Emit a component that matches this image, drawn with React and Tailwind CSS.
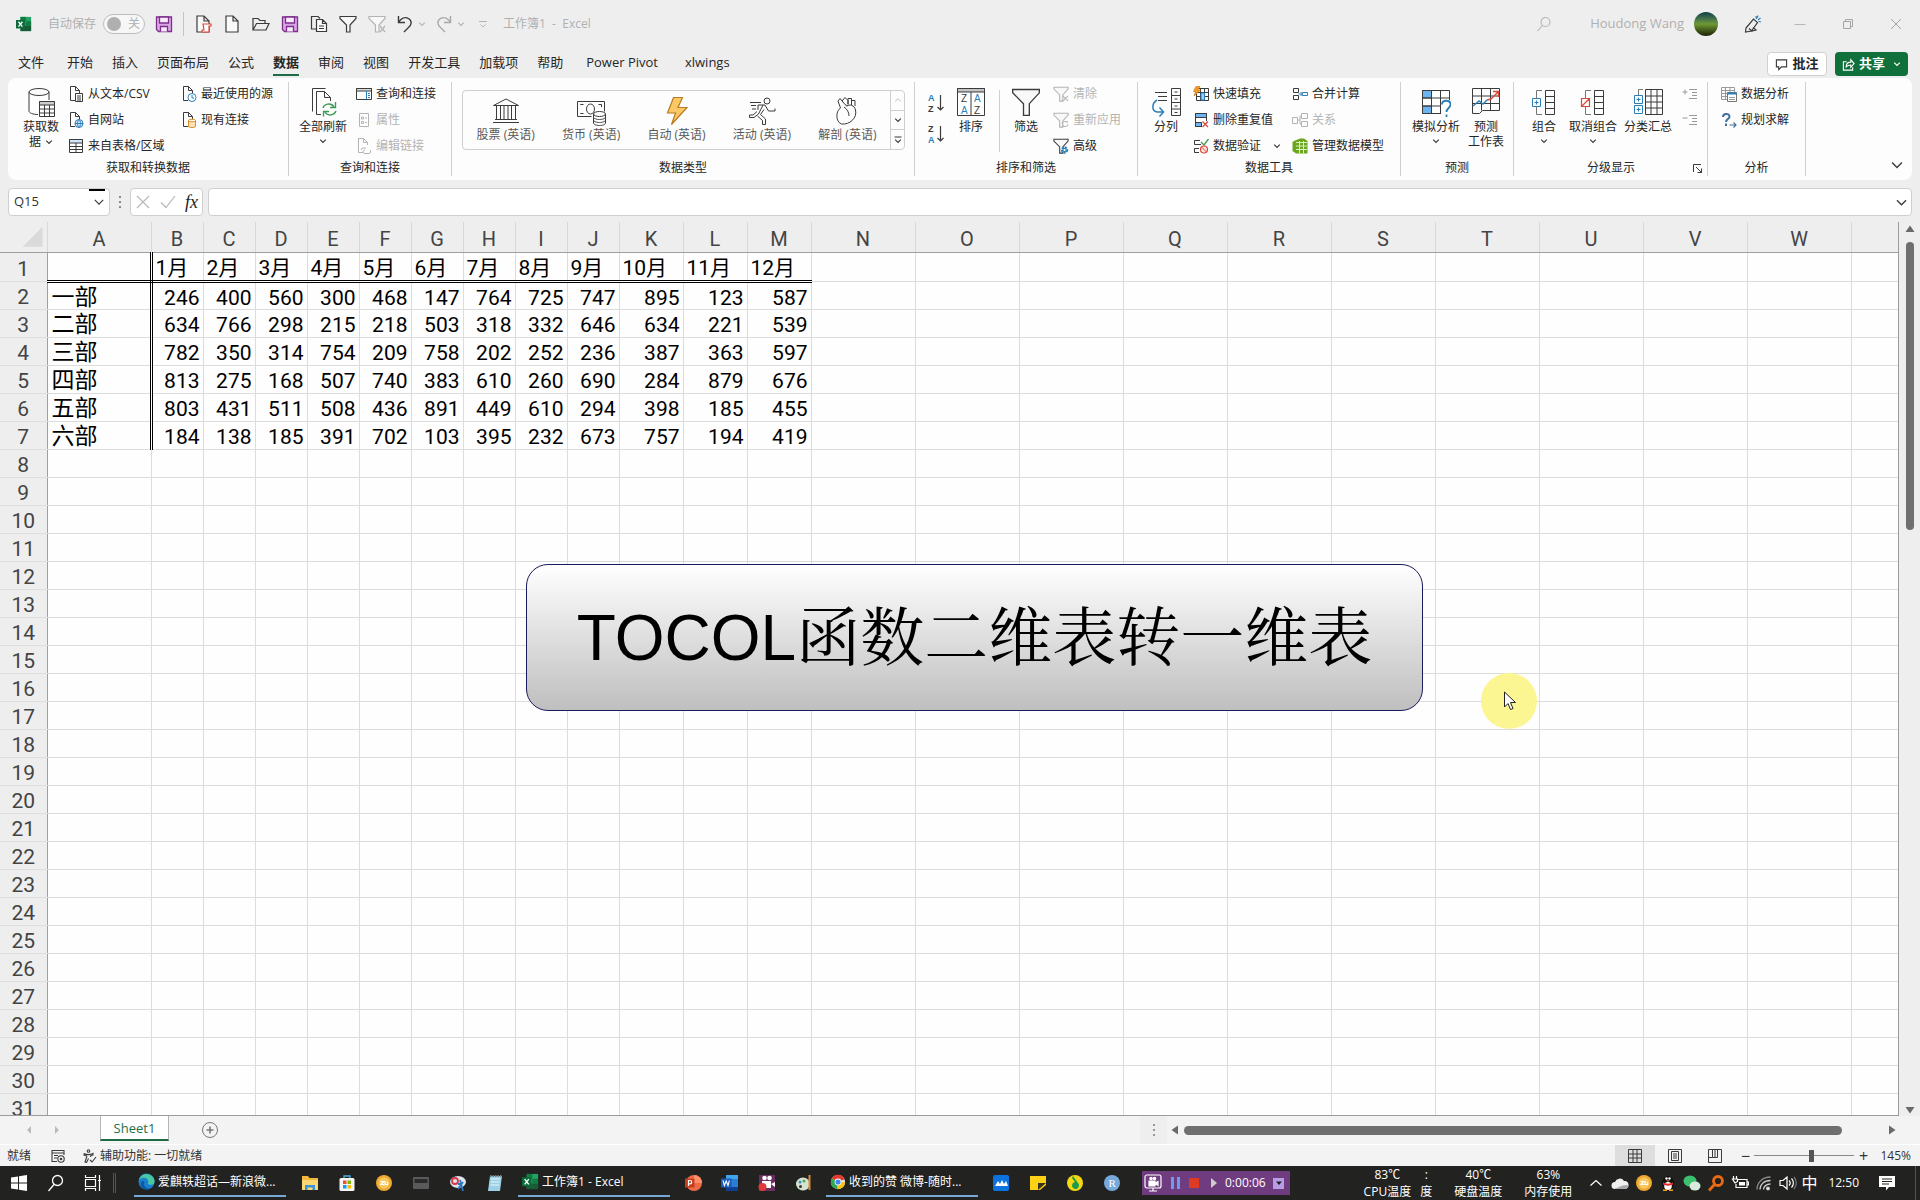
import { useState } from "react";

const TABS = ["文件", "开始", "插入", "页面布局", "公式", "数据", "审阅", "视图", "开发工具", "加载项", "帮助", "Power Pivot", "xlwings"];

const COLUMNS = "ABCDEFGHIJKLMNOPQRSTUVW".split("");

const SHEET = [
  ["", "1月", "2月", "3月", "4月", "5月", "6月", "7月", "8月", "9月", "10月", "11月", "12月"],
  ["一部", 246, 400, 560, 300, 468, 147, 764, 725, 747, 895, 123, 587],
  ["二部", 634, 766, 298, 215, 218, 503, 318, 332, 646, 634, 221, 539],
  ["三部", 782, 350, 314, 754, 209, 758, 202, 252, 236, 387, 363, 597],
  ["四部", 813, 275, 168, 507, 740, 383, 610, 260, 690, 284, 879, 676],
  ["五部", 803, 431, 511, 508, 436, 891, 449, 610, 294, 398, 185, 455],
  ["六部", 184, 138, 185, 391, 702, 103, 395, 232, 673, 757, 194, 419],
];

const ROW_COUNT = 31;

const DARK = "#3b3b3b";
const BLUE = "#2b7fb8";
const RED = "#d9493a";
const GRAY = "#b4b4b4";

/* ---------- icons ---------- */

function Svg({ s = 16, vb = s, stroke = DARK, sw = 1, children }) {
  return (
    <svg width={s} height={s} viewBox={`0 0 ${vb} ${vb}`} fill="none" stroke={stroke} strokeWidth={sw} className="shrink-0" aria-hidden="true">
      {children}
    </svg>
  );
}

function Caret({ s = 8, color = DARK }) {
  return (
    <Svg s={s} vb={8} stroke={color} sw={s > 10 ? 0.8 : 1.2}>
      <path d="M1.2 2.6 4 5.4l2.8-2.8" />
    </Svg>
  );
}

function ExcelIcon({ s = 18 }) {
  return (
    <Svg s={s} vb={18} stroke="none">
      <path d="M5 1h12v16H5z" fill="#21a366" />
      <path d="M5 1h6v5H5z" fill="#107c41" />
      <path d="M11 6h6v5h-6z" fill="#107c41" />
      <path d="M5 11h12v6H5z" fill="#185c37" />
      <path d="M0 4.500h10v9.500H0z" fill="#0b6b3a" />
      <path d="m2.800 6.500 4.400 5.500M7.200 6.500l-4.400 5.500" stroke="#fff" strokeWidth="1.500" />
    </Svg>
  );
}

function SaveIcon() {
  return (
    <Svg s={18} stroke="#7e2f8e" sw={1.3}>
      <path d="M1.500 2h15v14.500h-13l-2-2z" fill="#dba6e6" />
      <path d="M4.500 2h9v6h-9z" fill="#f6eaf8" />
      <path d="M5.500 16.500v-5h7v5" fill="#f6eaf8" />
    </Svg>
  );
}

function PageIcon({ stroke = DARK, s = 18, children }) {
  return (
    <Svg s={s} vb={18} stroke={stroke} sw={1.2}>
      <path d="M3 1h7l5 5v11H3zM10 1v5h5" fill="#fafafa" />
      {children}
    </Svg>
  );
}

// small page whose lower right corner carries a badge
function SourceIcon({ stroke = DARK, children }) {
  return (
    <Svg s={16} stroke={stroke}>
      <path d="M7 14.500H2.500v-14h5l4 4V7M7.500.5v4h4" fill="#fff" />
      {children}
    </Svg>
  );
}

function FunnelIcon({ s = 18, stroke = DARK, children }) {
  return (
    <Svg s={s} vb={18} stroke={stroke} sw={s > 20 ? 0.8 : 1.2}>
      <path d="M1 1.500h16v2l-6 6.500v7H7.500v-7L1 3.500z" fill="#f8f8f8" />
      {children}
    </Svg>
  );
}

function UndoIcon({ flip, stroke = DARK }) {
  return (
    <Svg s={18} stroke={stroke} sw={1.4}>
      <g transform={flip ? "matrix(-1 0 0 1 18 0)" : undefined}>
        <path d="M2.500 1v6.500H9M2.500 7.500C5 3.500 9 1.500 12.500 3.500c4 2.500 3 6.500 0 9L8 17" />
      </g>
    </Svg>
  );
}

function GridSmall({ blue }) {
  return (
    <Svg s={16}>
      <path d="M1.500 1.500h13v13h-13z" fill="#fff" />
      <path d="M1.500 1.500h13v3.500h-13z" fill={blue ? "#cfe6fb" : "#eee"} />
      <path d="M1.500 8.500h13M1.500 11.500h13M8 5v9.500" />
    </Svg>
  );
}

const dbIcon = (
  <Svg s={30}>
    <ellipse cx="13" cy="5" rx="10" ry="3.500" fill="#fafafa" />
    <path d="M3 5v19c0 2 4 3.500 9 3.500M23 5v8" />
    <path d="M13.500 14.500h15v15h-15z" fill="#fff" />
    <path d="M13.500 14.500h15v3.500h-15z" fill="#ccc" />
    <path d="M13.500 22h15M13.500 26h15M18.500 18v11.500M23.500 18v11.500" />
  </Svg>
);

const refreshIcon = (
  <Svg s={30}>
    <path d="M4.500 24.500V1.500h13M8.500 27.500v-23h8l6 6V14M16.500 4.500v6h6M8.500 27.500H13" />
    <path d="M15 21c1-4 8-6 11-1M27.500 15v5.500H22M28 24c-1.500 4-8 6-11 1M15.500 29.500V24.500H21" stroke="#3f9b57" strokeWidth="1.400" />
  </Svg>
);

const bankIcon = (
  <Svg s={28}>
    <path d="M1.500 8.500 14 2l12.500 6.500zM4.500 8.500V22M8.500 9v13M12 9v13M16 9v13M19.500 9v13M23.500 8.500V22M3 22.500h22M1 25.500h26" />
  </Svg>
);

const moneyIcon = (
  <Svg s={30}>
    <path d="M1.500 5.500h27v10M1.500 5.500v15h14M4.500 9V8.500h3M4.500 17v.5h3M25.500 11V8.500h-3" />
    <ellipse cx="14.500" cy="13" rx="4" ry="5" />
    <path d="M17.500 18v9c0 1.500 3 2.500 6 2.500s6-1 6-2.500v-9" fill="#fff" />
    <ellipse cx="23.500" cy="18" rx="6" ry="2.500" fill="#fff" />
    <path d="M17.500 21c0 1.500 3 2.500 6 2.500s6-1 6-2.500M17.500 24c0 1.500 3 2.500 6 2.500s6-1 6-2.500" />
  </Svg>
);

const boltIcon = (
  <Svg s={30} stroke="#b97b1f" sw={1.2}>
    <path d="M11.500 1.500h9L16 11.500h9L9.500 28.500l4-11.500H5.500z" fill="#fbc767" />
  </Svg>
);

const runIcon = (
  <Svg s={30}>
    <circle cx="20" cy="5" r="3" />
    <path d="M3 6.500h11M4 9.500h5M5 13h4M11 14V9h7l3.500 6H28v-2.500M17 13.500l-3.500 5 5 4.500v5.500h-3v-4l-5-4.500M16 9l-4.500 9L7 21.500H2.500V19H6l4-3.500" />
  </Svg>
);

const heartIcon = (
  <Svg s={30}>
    <path d="M8.500 12c-5 3-5 14 1 16 8 1 16-6 14-14-1-5-6-6-9-4M8.500 12 6 5l2-2.500 5 6 2.500 1.500M10 5l3-3.500 3 3v4M16 8V2.500h3.500V9M19.500 4.500H23V10" />
    <path d="M12 11c3 2 5 5 5 9" />
  </Svg>
);

function SortAZ({ top, bottom }) {
  return (
    <Svg s={20} stroke="none">
      <text x="1" y="8" fontSize="9" fontWeight="600" fontFamily="Liberation Sans, sans-serif" fill={top === "A" ? BLUE : DARK}>{top}</text>
      <text x="1" y="19" fontSize="9" fontWeight="600" fontFamily="Liberation Sans, sans-serif" fill={bottom === "A" ? BLUE : DARK}>{bottom}</text>
      <path d="M13.500 2v15M10.500 14l3 3 3-3" stroke={DARK} strokeWidth="1.200" />
    </Svg>
  );
}

const sortIcon = (
  <Svg s={30}>
    <path d="M1.500 1.500h27v27h-27z" fill="#fff" />
    <path d="M1.500 1.500h27V5h-27z" fill="#c4c4c4" />
    <path d="M15 5v23.500" />
    <g stroke="none" fontSize="10" fontFamily="Liberation Sans, sans-serif" fill={DARK}>
      <text x="5" y="15">Z</text>
      <text x="5" y="27" fill={BLUE}>A</text>
      <text x="18" y="15" fill={BLUE}>A</text>
      <text x="18" y="27">Z</text>
    </g>
  </Svg>
);

const columnsIcon = (
  <Svg s={32}>
    <path d="M5 6.500h12M8 10.500h9M8 14.500h9" />
    <path d="M21.500 2.500h9v27h-9zM21.500 9.500h9M21.500 16.500h9M21.500 23h9M24.500 6h3M24.500 13h3M24.500 20h3M24.500 26.500h3" />
    <path d="M7 14c-5 3-6 11 0 12h6M9.500 21.500l4 4.500-4 4.500" stroke={BLUE} strokeWidth="1.500" />
  </Svg>
);

const whatIfIcon = (
  <Svg s={30}>
    <path d="M1.500 3.500h27v23h-27z" fill="#fff" />
    <path d="M1.500 3.500h9V11h-9zM1.500 19h9v7.500h-9z" fill="#6db5f1" />
    <path d="M1.500 11h27M1.500 19h27M10.500 3.500v23M19.500 3.500v23" />
    <path d="M20 13h9.500v16H20z" fill="#fff" stroke="none" />
    <path d="M21 17.500c0-5 8.500-5 8.500 0 0 3.500-4 3.500-4 7.500M25.500 27.500V30" stroke={BLUE} strokeWidth="1.800" />
  </Svg>
);

const forecastIcon = (
  <Svg s={30}>
    <path d="M1.500 1.500h27v22h-17l-3 3h-7zM1.500 9h27M1.500 16.500h27M10.500 1.500v22M19.500 1.500v22" />
    <path d="m2 19 6-5 4 3 4-4" stroke={BLUE} strokeWidth="1.400" />
    <path d="m16 13 4-1 7-7M22 4.500h5.500V10" stroke={RED} strokeWidth="1.400" />
  </Svg>
);

const tableCol = "M15.500 2.500h9v24h-9zM15.500 8.500h9M15.500 14.500h9M15.500 20.500h9";

const groupIcon = (
  <Svg s={28}>
    <path d={tableCol} />
    <path d="M12 2.500H6.500V10M6.500 19v7.500H12" stroke="#777" />
    <path d="M2.500 10.500h8v8h-8zM6.500 12.500v4M4.500 14.500h4" stroke={BLUE} />
  </Svg>
);

const ungroupIcon = (
  <Svg s={28}>
    <path d={tableCol} />
    <path d="M12 2.500H6.500V10M6.500 19v7.500H12" stroke="#777" />
    <path d="M2.500 10.500h8v8h-8zM3 18l7-7" stroke={RED} strokeWidth="1.200" />
  </Svg>
);

const subtotalIcon = (
  <Svg s={30}>
    <path d="M12.500 2.500h17v25h-17zM12.500 9h17M12.500 15h17M12.500 21h17M18 2.500v25M24 2.500v25" />
    <path d="M10 2.500H5.500V8" stroke="#777" />
    <path d="M1.500 8.500h8v8h-8zM5.500 10.500v4M3.500 12.500h4M1.500 18.500h8v8h-8zM5.500 20.500v4M3.500 22.500h4" stroke={BLUE} />
  </Svg>
);

/* ---------- ribbon pieces ---------- */

function BigButton({ icon, lines, caret, width }) {
  return (
    <button className={`${width} flex shrink-0 flex-col items-center pt-2 text-[12px] leading-[15px]`}>
      <span className="flex h-[31px] items-center">{icon}</span>
      <span className="mt-[2px] whitespace-nowrap">{lines[0]}</span>
      {lines[1] && (
        <span className="flex items-center gap-1 whitespace-nowrap">
          {lines[1]}
          {caret && <Caret />}
        </span>
      )}
      {!lines[1] && caret && <span className="mt-[3px]"><Caret /></span>}
    </button>
  );
}

function SmallButton({ icon, label, off, caret }) {
  return (
    <button disabled={off} className={`flex h-[26px] items-center gap-1 whitespace-nowrap text-[12px] ${off ? "text-[#b4b4b4]" : "text-[#262626]"}`}>
      <span className="flex w-4 justify-center">{icon}</span>
      <span>{label}</span>
      {caret && <span className="ml-2"><Caret /></span>}
    </button>
  );
}

function Group({ width, label, launcher, children }) {
  return (
    <section aria-label={label} className={`${width} my-1 flex shrink-0 flex-col border-r border-[#d0d0d0]`}>
      <div className="-mt-1 flex h-[82px]">{children}</div>
      <div className="flex items-center text-[12px] leading-4">
        <span className="flex-1 text-center">{label}</span>
        {launcher && (
          <button aria-label="分级显示设置" className="-ml-4 mr-1">
            <Svg s={11} stroke={DARK}>
              <path d="M1.500 9V1.500H9M4 4l5.500 5.500M9.500 5.500v4h-4" />
            </Svg>
          </button>
        )}
      </div>
    </section>
  );
}

function Stack({ className = "", children }) {
  return <div className={`flex flex-col items-start pt-[3px] ${className}`}>{children}</div>;
}

const GALLERY = [
  ["股票 (英语)", bankIcon],
  ["货币 (英语)", moneyIcon],
  ["自动 (英语)", boltIcon],
  ["活动 (英语)", runIcon],
  ["解剖 (英语)", heartIcon],
];

function Ribbon() {
  return (
    <div className="mx-2 flex h-[102px] rounded-lg bg-[#fdfdfd] text-[#262626]">
      <Group width="w-[281px]" label="获取和转换数据">
        <BigButton width="w-[44px] ml-[11px]" icon={dbIcon} lines={["获取数", "据"]} caret />
        <Stack className="ml-[5px] w-[113px]">
          <SmallButton label="从文本/CSV" icon={<SourceIcon><path d="M7.500 7.500h7v8h-7z" fill="#fff" /><path d="M9 10h4M9 12h4M9 14h4" /></SourceIcon>} />
          <SmallButton label="自网站" icon={<SourceIcon><circle cx="11" cy="11.500" r="4" fill="#cfe6fb" stroke={BLUE} /><path d="M7 11.500h8M11 7.500c-2 2-2 6 0 8 2-2 2-6 0-8" stroke={BLUE} /></SourceIcon>} />
          <SmallButton label="来自表格/区域" icon={<GridSmall blue />} />
        </Stack>
        <Stack>
          <SmallButton label="最近使用的源" icon={<SourceIcon><circle cx="11" cy="11.500" r="4" fill="#fff" stroke={BLUE} /><path d="M11 9v3h2" stroke={BLUE} /></SourceIcon>} />
          <SmallButton label="现有连接" icon={<SourceIcon><path d="M7.500 8.500v6c2 1.500 5 1.500 7 0v-6z" fill="#fde3b8" stroke="#d98a1c" /><ellipse cx="11" cy="8.500" rx="3.500" ry="1.300" fill="#fff" stroke="#d98a1c" /></SourceIcon>} />
        </Stack>
      </Group>

      <Group width="w-[163px]" label="查询和连接">
        <BigButton width="w-[54px] ml-[7px]" icon={refreshIcon} lines={["全部刷新"]} caret />
        <Stack className="ml-[6px]">
          <SmallButton label="查询和连接" icon={<Svg><path d="M.5 2.500h15v11H.5z" /><path d="M.5 2.500h15V5H.5z" fill="#ddd" /><path d="M10.500 5v8.500" stroke={BLUE} /><path d="M12 7.500h2M12 9.500h2M12 11.500h2" stroke={BLUE} /></Svg>} />
          <SmallButton off label="属性" icon={<Svg stroke={GRAY}><path d="M3.500 1.500h9v13h-9zM5.500 5h2v2h-2zM5.500 9.500h2v2h-2zM9 6h2M9 10.500h2" /></Svg>} />
          <SmallButton off label="编辑链接" icon={<SourceIcon stroke={GRAY}><path d="M5 12a2 2 0 0 1 2-2h3M9 12h-1a2 2 0 0 0 0 3.500h5a2 2 0 0 0 1-3.500" /></SourceIcon>} />
        </Stack>
      </Group>

      <Group width="w-[463px]" label="数据类型">
        <div className="ml-[10px] mt-3 flex h-[60px] w-[443px] rounded border border-[#cfcfcf] text-[#595959]">
          <div className="flex flex-1">
            {GALLERY.map(([label, icon]) => (
              <button key={label} className="flex flex-1 flex-col items-center whitespace-nowrap pt-1 text-[12px] leading-[18px]">
                <span className="flex h-[31px] items-center">{icon}</span>
                {label}
              </button>
            ))}
          </div>
          <div className="flex w-[14px] flex-col divide-y divide-[#cfcfcf] border-l border-[#cfcfcf]">
            <button aria-label="上移" className="flex flex-1 items-center justify-center"><Svg s={8} stroke="#c0c0c0"><path d="M1.200 5.400 4 2.600l2.800 2.800" /></Svg></button>
            <button aria-label="下移" className="flex flex-1 items-center justify-center"><Caret /></button>
            <button aria-label="其他" className="flex flex-1 items-center justify-center"><Svg s={8} sw={1.2}><path d="M.5 1h7M1.200 3.600 4 6.400l2.800-2.800" /></Svg></button>
          </div>
        </div>
      </Group>

      <Group width="w-[223px]" label="排序和筛选">
        <div className="ml-3 flex flex-col gap-[11px] pt-[15px]">
          <button aria-label="升序"><SortAZ top="A" bottom="Z" /></button>
          <button aria-label="降序"><SortAZ top="Z" bottom="A" /></button>
        </div>
        <BigButton width="w-[40px] ml-1" icon={sortIcon} lines={["排序"]} />
        <div className="ml-2 mt-3 h-[62px] border-l border-[#d0d0d0]" />
        <BigButton width="w-[40px] ml-[6px]" icon={<FunnelIcon s={30} />} lines={["筛选"]} />
        <Stack className="ml-[7px]">
          <SmallButton off label="清除" icon={<FunnelIcon s={16} stroke={GRAY}><path d="m11 11 6 6M17 11l-6 6" /></FunnelIcon>} />
          <SmallButton off label="重新应用" icon={<FunnelIcon s={16} stroke={GRAY}><path d="M10 13c1-3 5-3 6-1v-2M17 14c-1 3-5 3-6 1v2" /></FunnelIcon>} />
          <SmallButton label="高级" icon={<FunnelIcon s={16}><circle cx="13" cy="13.500" r="3" fill="#fff" stroke={BLUE} strokeWidth="2.200" strokeDasharray="2.500 1" /><circle cx="13" cy="13.500" r="1.800" stroke={BLUE} /></FunnelIcon>} />
        </Stack>
      </Group>

      <Group width="w-[263px]" label="数据工具">
        <BigButton width="w-[44px] ml-[6px]" icon={columnsIcon} lines={["分列"]} />
        <Stack className="ml-[5px] w-[99px]">
          <SmallButton label="快速填充" icon={<Svg><path d="M3.500 2.500h12v12h-12zM3.500 6.500h12M3.500 10.500h12M7.500 2.500v12M11.500 2.500v12" stroke={DARK} /><path d="M8 7h3.500v7H8z" fill="#9fd0f7" stroke={BLUE} /><path d="M3 .5h4L5 4h2.500L1 10l1.500-4.500H.5z" fill="#f59b23" stroke="#c9700c" strokeWidth=".6" /></Svg>} />
          <SmallButton label="删除重复值" icon={<Svg><path d="M2.500 1.500h11v13h-11z" fill="#fff" /><path d="M2.500 1.500h11v4h-11zM2.500 10.500h6v4h-6z" fill="#6db5f1" /><path d="M9 9h7v7H9z" fill="#fff" stroke="none" /><path d="m9.500 9.500 5.500 5.500M15 9.500 9.500 15" stroke={RED} strokeWidth="1.300" /></Svg>} />
          <SmallButton label="数据验证" caret icon={<Svg><path d="M7 2.500H1.500v4H8M6 10.500H1.500v4H6" /><path d="m8 4 3 3 4.500-6" stroke="#3f9b57" strokeWidth="1.300" /><circle cx="11" cy="11.500" r="3.500" stroke={RED} fill="#fbe3e0" strokeWidth="1.200" /><path d="m8.500 9 5 5" stroke={RED} /></Svg>} />
        </Stack>
        <Stack>
          <SmallButton label="合并计算" icon={<Svg><path d="M1.500 2.500h5v4h-5zM1.500 9.500h5v4h-5z" /><path d="M6.500 8H10M8.500 6l2 2-2 2M10.500 6.500h5v3h-5z" stroke={BLUE} /></Svg>} />
          <SmallButton off label="关系" icon={<Svg stroke={GRAY}><path d="M.5 5.500h5v6h-5zM9.500 1.500h6v5h-6zM9.500 9.500h6v5h-6zM5.500 8H8M8 4v8M8 4h1.500M8 12h1.500" /></Svg>} />
          <SmallButton label="管理数据模型" icon={<Svg stroke="none"><path d="M2 3 8 .5h4L15.500 3v12.500H4L.5 13V4z" fill="#6aa61e" /><path d="M4 4.500h11M4 8h11M4 11.500h11M7.500 3v12.500M11.500 3v12.500" stroke="#dcefc0" /></Svg>} />
        </Stack>
      </Group>

      <Group width="w-[113px]" label="预测">
        <BigButton width="w-[50px] ml-[10px]" icon={whatIfIcon} lines={["模拟分析"]} caret />
        <BigButton width="w-[50px]" icon={forecastIcon} lines={["预测", "工作表"]} />
      </Group>

      <Group width="w-[194px]" label="分级显示" launcher>
        <BigButton width="w-[40px] ml-[10px]" icon={groupIcon} lines={["组合"]} caret />
        <BigButton width="w-[54px] ml-[2px]" icon={ungroupIcon} lines={["取消组合"]} caret />
        <BigButton width="w-[54px] ml-[1px]" icon={subtotalIcon} lines={["分类汇总"]} />
        <Stack className="ml-[7px]">
          <SmallButton off icon={<Svg stroke="#999"><path d="M.5 6h5M3 3.500v5M7 3.500h8M10 6.500h5M10 9.500h5M7 12.500h8" /></Svg>} />
          <SmallButton off icon={<Svg stroke="#999"><path d="M.5 6h5M7 3.500h8M10 6.500h5M10 9.500h5M7 12.500h8" /></Svg>} />
        </Stack>
      </Group>

      <Group width="w-[98px]" label="分析">
        <Stack className="ml-[13px]">
          <SmallButton label="数据分析" icon={<Svg stroke="#9a9a9a"><path d="M.5 1.500h13v12H.5zM.5 4.500h13M.5 7.500h13M.5 10.500h13M4.500 1.500v12M9 1.500v12" /><path d="M6.500 6.500h9v9h-9z" fill="#fff" stroke="#777" /><path d="M6.500 6.500h9v2h-9z" fill={BLUE} stroke="none" /><path d="M8 11.500h6M8 13.500h6" /></Svg>} />
          <SmallButton label="规划求解" icon={<Svg stroke="#3f6f9a" sw={2}><path d="M2 5c0-4 6.500-4 6.500-.5C8.500 7 5 7 5 10M5 11.500V14" /><path d="M8.500 13h6M12.500 10.500 15 13l-2.500 2.500" strokeWidth="1.100" /></Svg>} />
        </Stack>
      </Group>

      <div className="flex flex-1 items-end justify-end pb-2 pr-2">
        <button aria-label="折叠功能区"><Caret s={14} /></button>
      </div>
    </div>
  );
}

/* ---------- window chrome ---------- */

function TitleBar() {
  return (
    <header className="flex h-[40px] items-center text-[12px] text-[#b0b0b0]">
      <span className="ml-4"><ExcelIcon s={16} /></span>
      <label className="ml-4 flex items-center gap-[7px]">
        自动保存
        <button role="switch" aria-checked="false" className="flex h-5 w-[42px] items-center justify-between rounded-full border border-[#bcbcbc] bg-[#f7f7f7] pl-[3px] pr-1">
          <span className="size-[14px] rounded-full bg-[#b0b0b0]" />
          关
        </button>
      </label>
      <button aria-label="保存" className="ml-[10px]"><SaveIcon /></button>
      <span className="ml-[10px] h-6 border-l border-[#c4c4c4]" />
      <div className="ml-[10px] flex items-center gap-[11px]">
        <button aria-label="脚本"><PageIcon><path d="M9 9h8v2h-2v6H8v-2h2z" fill="#fff" stroke={RED} /></PageIcon></button>
        <button aria-label="新建"><PageIcon /></button>
        <button aria-label="打开"><Svg s={18} sw={1.2}><path d="M1 15V3.500h5l2 2h5v3M1 15l3.500-6.500H17L14 15z" /></Svg></button>
        <button aria-label="保存工作簿"><SaveIcon /></button>
        <button aria-label="复制"><Svg s={18} sw={1.2}><path d="M6 14H1.500V1.500H8l2 2" /><path d="M6.500 4.500h6l4 4v8h-10zM12.500 4.500v4h4M9 11h5M9 13.500h5" fill="#fafafa" /></Svg></button>
        <button aria-label="筛选"><FunnelIcon /></button>
        <button aria-label="清除筛选"><FunnelIcon stroke={GRAY}><path d="m12 11 5 6M17 11l-5 6" /></FunnelIcon></button>
      </div>
      <button aria-label="撤消" className="ml-[10px] flex items-center gap-1"><UndoIcon /><Caret color={GRAY} /></button>
      <button aria-label="恢复" className="ml-[9px] flex items-center gap-1"><UndoIcon flip stroke="#a8a8a8" /><Caret color={GRAY} /></button>
      <button aria-label="自定义快速访问工具栏" className="ml-3"><Svg s={12} stroke={GRAY}><path d="M2 3.500h8M3.500 6.500 6 9l2.500-2.500" /></Svg></button>
      <h1 className="ml-[14px] whitespace-pre text-[12px]">{"工作簿1  -  Excel"}</h1>

      <div className="ml-auto flex items-center pr-[18px]">
        <button aria-label="搜索"><Svg s={16} stroke={GRAY} sw={1.1}><circle cx="9.500" cy="6" r="4.500" /><path d="M6.500 9.500 1.500 15" /></Svg></button>
        <span className="ml-[38px] text-[13px]">Houdong Wang</span>
        <span className="ml-[10px] size-6 rounded-full bg-linear-to-b from-[#0e3f4a] via-[#6f9a35] to-[#1c2407]" />
        <button aria-label="绘图" className="ml-[26px]">
          <Svg s={18} sw={1.2}><path d="M2 13 9.500 4l4 3.500L7.500 16 1.500 17zM5 13.500l3 2.500 4-1-3-2.500" /><path d="m12 1 .500 3M16.500 3l-2.500 2M14 .5 13 3M17 7l-2.500-.5" stroke={BLUE} /></Svg>
        </button>
        <button aria-label="最小化" className="ml-8"><Svg s={12} stroke="#b8b8b8"><path d="M.5 6.500h11" /></Svg></button>
        <button aria-label="向下还原" className="ml-9"><Svg s={12} stroke="#a5a5a5"><path d="M1.500 3.500h7v7h-7zM3.500 3.500v-2h7v7h-2" /></Svg></button>
        <button aria-label="关闭" className="ml-9"><Svg s={12} stroke="#a5a5a5"><path d="m1 1 10 10M11 1 1 11" /></Svg></button>
      </div>
    </header>
  );
}

function TabRow({ active, onSelect }) {
  return (
    <nav className="flex h-[34px] items-center pl-[18px] pr-3 pt-[6px] text-[#262626]">
      <div role="tablist" className="flex gap-[19px] text-[13px]">
        {TABS.map((t, i) => (
          <button
            key={t}
            role="tab"
            aria-selected={t === active}
            onClick={() => onSelect(t)}
            className={`whitespace-nowrap border-b-2 pb-[2px] leading-[20px] ${i === 1 ? "ml-1" : ""} ${i === 11 ? "ml-1" : ""} ${i === 12 ? "ml-2" : ""} ${t === active ? "border-[#1e6b45] font-bold" : "border-transparent"}`}
          >
            {t}
          </button>
        ))}
      </div>
      <div className="ml-auto flex gap-2 text-[13px] font-bold">
        <button className="flex h-6 w-[60px] items-center justify-center gap-1 rounded border border-[#d0d0d0] bg-white">
          <Svg s={13} vb={14} sw={1.2}><path d="M1.500 2h11v7.500H7L4 12.500v-3H1.500z" /></Svg>
          批注
        </button>
        <button className="flex h-6 w-[73px] items-center justify-center gap-1 rounded bg-[#0f703b] text-white">
          <Svg s={13} vb={14} stroke="#fff" sw={1.2}><path d="M5 4H1.500v9h10v-3M4.500 9.500c0-3 2-5 5-5V2l3.500 4-3.500 4V7.500c-2 0-3.500.5-5 2z" /></Svg>
          共享
          <span className="ml-1"><Caret color="#fff" /></span>
        </button>
      </div>
    </nav>
  );
}

function FormulaBar() {
  return (
    <div className="mx-2 mt-2 flex h-[28px] items-center">
      <div className="flex h-full w-[102px] items-center rounded border border-[#cfcfcf] bg-white pr-1">
        <input aria-label="名称框" defaultValue="Q15" className="w-full min-w-0 bg-transparent pl-[5px] text-[13px] text-[#333] outline-none" />
        <span className="-ml-4 h-full w-4 shrink-0 border-t-2 border-black pt-2" />
        <button aria-label="名称列表" className="-ml-3"><Caret s={12} /></button>
      </div>
      <span className="mx-[9px] flex flex-col gap-[3px]">
        <i className="size-[2px] bg-[#8a8a8a]" />
        <i className="size-[2px] bg-[#8a8a8a]" />
        <i className="size-[2px] bg-[#8a8a8a]" />
      </span>
      <div className="flex h-full w-[73px] items-center justify-between rounded border border-[#cfcfcf] bg-white pl-[5px] pr-1">
        <button aria-label="取消"><Svg s={14} stroke="#b8b8b8" sw={1.2}><path d="m1 1 12 12M13 1 1 13" /></Svg></button>
        <button aria-label="输入"><Svg s={16} stroke="#b8b8b8" sw={1.2}><path d="m1 8.500 5 5L15 2" /></Svg></button>
        <button aria-label="插入函数" className="font-['Liberation_Serif',serif] text-[18px] italic leading-5 text-[#222]">fx</button>
      </div>
      <div className="ml-[5px] flex h-full flex-1 items-center rounded border border-[#cfcfcf] bg-white pr-[3px]">
        <input aria-label="编辑栏" className="flex-1 bg-transparent px-2 text-[14px] outline-none" />
        <button aria-label="展开编辑栏"><Caret s={13} /></button>
      </div>
    </div>
  );
}

/* ---------- sheet ---------- */

function cellClass(row, col) {
  const inTable = row < SHEET.length && col < 13;
  let cls = "whitespace-nowrap border border-[#dcdcdc] p-0 ";
  if (inTable) {
    cls += "pt-1 ";
    cls += col > 0 && row > 0 ? "pr-[3px] text-right text-[21px] " : col > 0 ? "pl-[3px] text-left text-[21px] " : "pl-1 text-left text-[23px] ";
    if (row === 0) cls += "border-b-3 [border-bottom-style:double] border-b-black ";
    if (col === 0) cls += "border-r-3 [border-right-style:double] border-r-black ";
  }
  return cls;
}

function Sheet() {
  return (
    <div className="relative mt-[6px] min-h-0 flex-1 overflow-hidden border-b border-r border-[#9b9b9b] bg-[#fefefe]">
      <table className="w-full table-fixed border-collapse font-['Roboto','Noto_Sans_CJK_SC',sans-serif] leading-[22px] text-black">
        <colgroup>
          <col className="w-[47px]" />
          {COLUMNS.map((c, i) => (
            <col key={c} className={i === 0 || i > 12 ? "w-[104px]" : i < 10 ? "w-[52px]" : "w-[64px]"} />
          ))}
          <col />
        </colgroup>
        <thead className="bg-[#eeeeee] text-[20px] text-[#444]">
          <tr className="h-[30px]">
            <th className="border-b border-[#a0a0a0] p-0">
              <span className="ml-auto mr-1 block size-5 bg-[#dadada] [clip-path:polygon(100%_0,100%_100%,0_100%)]" />
            </th>
            {COLUMNS.map((c) => (
              <th key={c} className="border-x border-b border-x-[#d8d8d8] border-b-[#a0a0a0] p-0 pt-1 font-normal">{c}</th>
            ))}
            <th className="border-b border-[#a0a0a0] p-0" />
          </tr>
        </thead>
        <tbody>
          {Array.from({ length: ROW_COUNT }, (_, r) => (
            <tr key={r} className={r === 0 ? "h-[29px]" : "h-[28px]"}>
              <th className="border-y border-r border-y-[#dedede] border-r-[#a0a0a0] bg-[#eeeeee] p-0 pt-1 text-[21px] font-normal text-[#444]">{r + 1}</th>
              {COLUMNS.map((c, i) => (
                <td key={c} className={cellClass(r, i)}>{SHEET[r]?.[i] ?? ""}</td>
              ))}
              <td className="border-y border-[#dcdcdc] p-0" />
            </tr>
          ))}
        </tbody>
      </table>

      {/* text box floating over the cells */}
      <div className="absolute left-[526px] top-[342px] flex h-[147px] w-[897px] items-center justify-center whitespace-nowrap rounded-[22px] border border-[#1a1a5e] bg-linear-to-b from-white to-[#bfbfbf] font-['Liberation_Sans','Noto_Serif_CJK_SC','Noto_Sans_CJK_SC',sans-serif] text-[64px] leading-none text-black">
        TOCOL函数二维表转一维表
      </div>

      {/* highlighted mouse pointer */}
      <div className="absolute left-[1481px] top-[451px] flex size-14 items-center justify-center rounded-full bg-[#fbf691]">
        <Svg s={22} stroke="#222">
          <path d="M6.500 2v15l3.500-3.500 2.500 6 2.500-1-2.500-6h5z" fill="#fff" />
        </Svg>
      </div>
    </div>
  );
}

function Arrow({ d }) {
  return (
    <Svg s={10} stroke="none"><path d={d} fill="#6a6a6a" /></Svg>
  );
}

function SheetTabs() {
  return (
    <div className="flex h-[28px] items-center bg-[#f3f3f3]">
      <button aria-label="上一张" className="ml-6"><Svg s={10} stroke="none"><path d="M7 1v8L3 5z" fill="#bbb" /></Svg></button>
      <button aria-label="下一张" className="ml-[18px]"><Svg s={10} stroke="none"><path d="M3 1v8l4-4z" fill="#bbb" /></Svg></button>
      <button className="-mt-[3px] ml-[38px] h-[25px] w-[69px] border-x border-b-2 border-x-[#b5b5b5] border-b-[#1e6b45] bg-white text-[13px] leading-5 text-[#1e7145]">Sheet1</button>
      <button aria-label="新工作表" className="ml-[32px]"><Svg s={18} stroke="#777"><circle cx="9" cy="9" r="7.500" /><path d="M9 5.500v7M5.500 9h7" strokeWidth="1.600" /></Svg></button>
      <div className="ml-auto flex h-full w-[27px] items-center justify-center bg-[#eeeeee]">
        <span className="flex flex-col gap-[3px]">
          <i className="size-[2px] bg-[#999]" />
          <i className="size-[2px] bg-[#999]" />
          <i className="size-[2px] bg-[#999]" />
        </span>
      </div>
      <div className="ml-[3px] flex w-[727px] items-center">
        <Arrow d="M8 .5v9L1.500 5z" />
        <div className="ml-1 h-[9px] w-[658px] rounded-full bg-[#6f6f6f]" />
        <span className="ml-auto"><Arrow d="M2 .5v9L8.500 5z" /></span>
      </div>
      <span className="w-[23px]" />
    </div>
  );
}

function StatusBar() {
  return (
    <footer className="flex h-[22px] items-center border-t border-white bg-[#f3f3f3] text-[12px] text-[#333]">
      <span className="ml-[7px]">就绪</span>
      <span className="ml-5"><Svg s={14} sw={1.1}><path d="M6 12.500H1v-11h12V6M1 4h12M3 6.500h4M3 9h3" /><circle cx="10" cy="10" r="3.200" /><circle cx="10" cy="10" r=".8" fill={DARK} /></Svg></span>
      <button className="ml-[18px] flex items-center gap-[3px]">
        <Svg s={14} sw={1.1}><circle cx="5.500" cy="2" r="1.300" /><path d="M1 4.500c3 1.500 6 1.500 9 0v1.500L7.500 7v1M4 7 1 6V4.500M4 7l-2 6 1.500.5 2-4" /><path d="m7 11 2 2 4-5" /></Svg>
        辅助功能: 一切就绪
      </button>
      <div className="ml-auto flex h-full items-center">
        <button aria-label="普通" className="flex h-full w-10 items-center justify-center bg-[#dedede]"><Svg s={14}><path d="M.5.500h13v13H.5zM.5 5h13M.5 9h13M5 .5v13M9 .5v13" /></Svg></button>
        <button aria-label="页面布局" className="flex w-10 justify-center"><Svg s={14}><path d="M.5.500h13v13H.5zM3.500 2.500h7v9h-7zM5 5h4M5 7h4M5 9h4" /></Svg></button>
        <button aria-label="分页预览" className="flex w-10 justify-center"><Svg s={14}><path d="M.5.500h13v13H.5zM4.500.500v8h5v-8M.5 8.500h4M7 .5v8" /></Svg></button>
        <button aria-label="缩小" className="ml-[2px] w-4 text-[16px] leading-none">−</button>
        <div className="ml-[1px] flex w-[100px] items-center">
          <input aria-label="缩放" type="range" min="0" max="100" defaultValue="57" className="h-3 w-full appearance-none bg-linear-to-b from-[#8a8a8a] to-[#8a8a8a] bg-[length:100%_1px] bg-center bg-no-repeat [&::-webkit-slider-thumb]:h-3 [&::-webkit-slider-thumb]:w-[5px] [&::-webkit-slider-thumb]:appearance-none [&::-webkit-slider-thumb]:bg-[#555]" />
        </div>
        <button aria-label="放大" className="ml-[1px] w-4 text-[16px] leading-none">+</button>
        <span className="ml-[9px] mr-[9px]">145%</span>
      </div>
    </footer>
  );
}

/* ---------- taskbar ---------- */

function TaskIcon({ label, children }) {
  return (
    <button aria-label={label} className="flex h-full w-[37px] shrink-0 items-center justify-center">
      <Svg s={18} stroke="none">{children}</Svg>
    </button>
  );
}

function TaskWindow({ icon, title }) {
  return (
    <button className="flex h-[31px] w-[152px] shrink-0 items-center gap-[3px] self-start border-b-2 border-[#76a9d8] pl-1 pt-[2px] text-[12px]">
      {icon}
      <span className="whitespace-nowrap">{title}</span>
    </button>
  );
}

function Meter({ value, name, width }) {
  return (
    <div className={`${width} text-center text-[12px] leading-[17px]`}>
      <div>{value}</div>
      <div className="whitespace-nowrap">{name}</div>
    </div>
  );
}

const coin = (
  <>
    <circle cx="9" cy="9" r="8" fill="#f0a92f" />
    <circle cx="9" cy="9" r="5.500" fill="#f8c863" />
    <path d="M5.500 7.500h3l-2.500 3h3M10 7v3.500h2.500V8" fill="none" stroke="#fff" strokeWidth="1.200" />
  </>
);

function Taskbar() {
  return (
    <div className="flex h-[34px] items-center overflow-hidden bg-[#222321] text-white">
      <TaskIcon label="开始"><path d="M1 3.500 8 2.500V8.500H1zM9 2.300 17 1v7.500H9zM1 9.500h7v6L1 14.500zM9 9.500h8V17l-8-1.300z" fill="#fff" /></TaskIcon>
      <TaskIcon label="搜索"><g fill="none" stroke="#fff" strokeWidth="1.300"><circle cx="10.500" cy="6.500" r="5" /><path d="M7 10.500 1.500 17" /></g></TaskIcon>
      <TaskIcon label="任务视图"><path d="M1.500 1v2.500h10V1M1.500 5.500h10v7h-10zM1.500 17v-2.500h10V17M15.500 1v16M14 6.500h3" fill="none" stroke="#fff" strokeWidth="1.200" /></TaskIcon>
      <span className="ml-[2px] mr-[18px] h-5 w-[3px] border-x border-[#555]" />
      <TaskWindow
        title="爱麒轶超话—新浪微..."
        icon={
          <Svg s={17} vb={18} stroke="none">
            <circle cx="9" cy="9" r="8.500" fill="#1b7fd0" />
            <path d="M1 8C2 2 8-.5 13 2c4 2 5.500 6 4 9-2 2.500-6 1.500-6.500 0 1.500-3-1-6-4-6C4 5 2 6 1 8z" fill="#49c7a3" />
            <path d="M7 9c-2 4 1 8 6 7.500-4 2.500-9 .5-10-3S4.500 7 7 9z" fill="#0c59a4" />
          </Svg>
        }
      />
      <div className="ml-[5px] flex h-full">
        <TaskIcon label="文件资源管理器"><path d="M1 2h6l1.500 2H17v12H1z" fill="#f3b93c" /><path d="M1 6h16v10H1z" fill="#fcd670" /><path d="M4 16v-5h10v5h-2.500v-2.500h-5V16z" fill="#3b92d8" /></TaskIcon>
        <TaskIcon label="应用商店"><path d="M6 4V2h6v2" fill="none" stroke="#4fb0e6" strokeWidth="1.300" /><rect x="1.500" y="4" width="15" height="13" rx="1.500" fill="#f4f4f4" /><path d="M5 6.500h3.500V10H5z" fill="#f25022" /><path d="M9.500 6.500H13V10H9.500z" fill="#7fba00" /><path d="M5 11h3.500v3.500H5z" fill="#00a4ef" /><path d="M9.500 11H13v3.500H9.500z" fill="#ffb900" /></TaskIcon>
        <TaskIcon label="微博">{coin}</TaskIcon>
        <TaskIcon label="终端"><rect x="1" y="3" width="16" height="12" rx="1" fill="#5a5a5a" /><path d="M2.500 5h13v4h-13z" fill="#2a2a2a" /></TaskIcon>
        <TaskIcon label="截图工具"><ellipse cx="9" cy="8" rx="8" ry="6" fill="#dfe3ea" /><circle cx="6" cy="7" r="3" fill="none" stroke="#d8384a" strokeWidth="1.800" /><path d="M9 10h4M11 6l3 11M14 8l-5 7" stroke="#2d77c2" strokeWidth="1.800" /></TaskIcon>
        <TaskIcon label="记事本"><path d="M4 2h12l-2 15H2z" fill="#9bd0e6" /><path d="M5 5h9M4.500 8h9M4.500 11h9" stroke="#e8f6fb" /><path d="M4 2h12" stroke="#6f7d84" strokeWidth="2" strokeDasharray="1.500 1" /></TaskIcon>
      </div>
      <span className="w-[5px]" />
      <TaskWindow title="工作簿1 - Excel" icon={<ExcelIcon s={17} />} />
      <div className="ml-[4px] flex h-full">
        <TaskIcon label="PowerPoint"><circle cx="10" cy="9" r="8" fill="#ed6c47" /><path d="M10 1a8 8 0 0 1 8 8h-8z" fill="#ff8f6b" /><path d="M1 4.500h9.500v9H1z" fill="#c43e1c" /><path d="M4.500 12V6.500H6a1.700 1.700 0 0 1 0 3.400H4.500" fill="none" stroke="#fff" strokeWidth="1.200" /></TaskIcon>
        <TaskIcon label="Word"><path d="M5 1h12v16H5z" fill="#2b7cd3" /><path d="M5 1h12v4H5z" fill="#41a5ee" /><path d="M5 13h12v4H5z" fill="#103f91" /><path d="M0 4.500h10.500v9H0z" fill="#185abd" /><path d="m2 6.500 1.400 5L5.200 7 7 11.500l1.400-5" fill="none" stroke="#fff" strokeWidth="1.100" /></TaskIcon>
        <TaskIcon label="录屏工具"><path d="M1 1h16v16H1z" fill="#6b2d5f" /><circle cx="6.500" cy="4" r="2.300" fill="#fff" /><circle cx="11.500" cy="4" r="2.300" fill="#fff" /><path d="M4 7h9v7H4zM13 10l4-2v5z" fill="#fff" /><circle cx="4.500" cy="13" r="4" fill="#e03a3a" /></TaskIcon>
        <TaskIcon label="画图"><ellipse cx="8" cy="10" rx="7" ry="6.500" fill="#d5e2d0" /><circle cx="5" cy="8" r="1.500" fill="#3b92d8" /><circle cx="9" cy="7" r="1.500" fill="#4caf50" /><circle cx="5.500" cy="12.500" r="1.500" fill="#333" /><path d="M14.500 1v15" stroke="#d98a3a" strokeWidth="2" /></TaskIcon>
      </div>
      <span className="w-1" />
      <TaskWindow
        title="收到的赞 微博-随时..."
        icon={
          <Svg s={16} vb={18} stroke="none">
            <circle cx="9" cy="9" r="8" fill="#e8e8e8" />
            <path d="M9 9 2 5a8 8 0 0 1 14.500 1z" fill="#e33b2e" />
            <path d="M9 9h8a8 8 0 0 1-9 8z" fill="#fbc116" />
            <path d="M9 9 8 17A8 8 0 0 1 2 5z" fill="#2da94f" />
            <circle cx="9" cy="9" r="3.800" fill="#fff" />
            <circle cx="9" cy="9" r="2.900" fill="#4285f4" />
          </Svg>
        }
      />
      <div className="ml-[4px] flex h-full">
        <TaskIcon label="腾讯会议"><rect x="1" y="1" width="16" height="16" rx="2" fill="#0b72e0" /><path d="m3 12 3-5 2 3 2-4 2 4 2-3 2 5z" fill="#fff" /></TaskIcon>
        <TaskIcon label="便笺"><path d="M1 2h16v9l-6 5H1z" fill="#fcd116" /><path d="M9 9h8l-8 7z" fill="#3a3320" /></TaskIcon>
        <TaskIcon label="音乐"><circle cx="9" cy="9" r="8" fill="#f6d714" /><path d="m7 2 5 7a3.500 3.500 0 1 1-3-1L6 4z" fill="#1a9c4b" /></TaskIcon>
        <TaskIcon label="RStudio"><circle cx="9" cy="9" r="8" fill="#75aadb" /><text x="5.500" y="13" fontSize="11" fontFamily="Liberation Serif, serif" fill="#fff">R</text></TaskIcon>
      </div>

      {/* screen recorder strip */}
      <div className="ml-[12px] flex h-6 w-[148px] shrink-0 items-center gap-[6px] bg-[#6f3d7f] px-[2px] text-[12px]">
        <Svg s={18} stroke="#fff" sw={1.2}><rect x="1" y="1" width="16" height="13" rx="2" /><path d="M5 17h8M9 14v3" /><circle cx="7" cy="4.500" r="1.200" fill="#fff" /><circle cx="10.500" cy="4.500" r="1.200" fill="#fff" /><path d="M5 7h6v5H5zM11 9l3-1.500v4z" fill="#fff" /></Svg>
        <button aria-label="暂停" className="flex gap-[3px] px-[3px]"><i className="h-3 w-[3px] bg-[#6f9bef]" /><i className="h-3 w-[3px] bg-[#6f9bef]" /></button>
        <button aria-label="停止" className="size-[10px] bg-[#dd3b22]" />
        <button aria-label="播放" className="ml-1"><Svg s={10} stroke="none"><path d="M2 0v10l6-5z" fill="#ccc" /></Svg></button>
        <span>0:00:06</span>
        <button aria-label="选项" className="ml-auto mr-[4px] flex size-[11px] items-center justify-center bg-[#b79ce6]"><Svg s={8} stroke="none"><path d="M1 2.500h6L4 6z" fill="#222" /></Svg></button>
      </div>

      <div className="ml-auto flex h-full items-center">
        <Meter value="83℃" name="CPU温度" width="w-[58px]" />
        <Meter value=":" name="度" width="w-[20px]" />
        <Meter value="40℃" name="硬盘温度" width="w-[84px]" />
        <Meter value="63%" name="内存使用" width="w-[56px]" />
      </div>
      <div className="ml-[11px] flex h-full items-center gap-[6px]">
        <Svg s={18} stroke="#fff" sw={1.2}><path d="m3.500 11.500 5.500-5 5.500 5" /></Svg>
        <Svg s={18} stroke="none"><path d="M4 15a3.500 3.500 0 0 1 0-7 5 5 0 0 1 9-1 4 4 0 0 1 1 8z" fill="#f0f0f0" /><path d="M3 15c4-1 7-4 13-4 2 1 1 4-2 4z" fill="#a8a8a8" /></Svg>
        <Svg s={18} stroke="none">{coin}</Svg>
        <Svg s={18} stroke="none"><ellipse cx="9" cy="9.500" rx="6" ry="7.500" fill="#111" /><ellipse cx="9" cy="12" rx="3.800" ry="4" fill="#fff" /><path d="M4 8.500c3 1.500 7 1.500 10 0v2c-3 1.500-7 1.500-10 0z" fill="#e12a2a" /><circle cx="7.500" cy="4.500" r="1.200" fill="#fff" /><circle cx="10.500" cy="4.500" r="1.200" fill="#fff" /><path d="M7 6.500h4l-2 1.200zM4 15.500h4V17H4zM10 15.500h4V17h-4z" fill="#f6a21c" /></Svg>
        <Svg s={18} stroke="none"><ellipse cx="7" cy="7" rx="6.500" ry="5.500" fill="#3cbf6e" /><ellipse cx="12" cy="12" rx="5.500" ry="4.500" fill="#d7eadd" /></Svg>
        <Svg s={18} stroke="#ec6a12" sw={2.8}><circle cx="11" cy="7" r="4.500" /><path d="m7.500 10.500-5.500 6" /></Svg>
        <Svg s={18} stroke="#fff" sw={1.2}><path d="M6 5.500h10v8H5V10M16 8h1.500v3H16M2.500 2v3M5.500 2v3M1.500 5h5v2.500L4 9z" /><path d="M8 8h6v3.500H8z" fill="#fff" stroke="none" /></Svg>
        <Svg s={18} stroke="#cfcfcf" sw={1.3}><path d="M2 15.500C2 8 8 3 15.500 3" opacity=".6" /><path d="M5 15.500c0-5 4-9 10.500-9M8.500 15.500c0-3 3-5.500 7-5.500" /><circle cx="13" cy="14.500" r="1.300" fill="#fff" /></Svg>
        <Svg s={18} stroke="#fff" sw={1.2}><path d="M1 6.500h3L8 3v12l-4-3.500H1zM10 6.500c1.500 1.500 1.500 3.500 0 5M12.500 4.500c2.500 2.500 2.500 6.500 0 9" /><path d="M15 3c3 3.500 3 8.500 0 12" opacity=".4" /></Svg>
      </div>
      <span className="ml-1 text-[16px]">中</span>
      <span className="ml-[11px] text-[12px]">12:50</span>
      <button aria-label="通知" className="mx-[19px]"><Svg s={18} stroke="none"><path d="M1 2h16v11h-6l-3 3.500V13H1z" fill="#fff" /><path d="M4 5h10M4 7.500h10M4 10h7" stroke="#222" /></Svg></button>
      <span className="mr-1 h-full border-l border-[#555]" />
    </div>
  );
}

export default function App() {
  const [tab, setTab] = useState("数据");

  return (
    <div className="flex h-screen min-w-[1900px] flex-col overflow-hidden bg-[#eeeeee] pt-1 font-['Open_Sans','Noto_Sans_CJK_SC',sans-serif]">
      <TitleBar />
      <TabRow active={tab} onSelect={setTab} />
      <Ribbon />
      <FormulaBar />
      <div className="flex min-h-0 flex-1">
        <Sheet />
        <div className="flex w-[21px] flex-col items-center pb-[1px] pt-2">
          <Arrow d="M.5 8h9L5 1.500z" />
          <div className="mt-2 h-[288px] w-[8px] rounded-full bg-[#6f6f6f]" />
          <span className="mt-auto"><Arrow d="M.5 2h9L5 8.500z" /></span>
        </div>
      </div>
      <SheetTabs />
      <StatusBar />
      <Taskbar />
    </div>
  );
}
